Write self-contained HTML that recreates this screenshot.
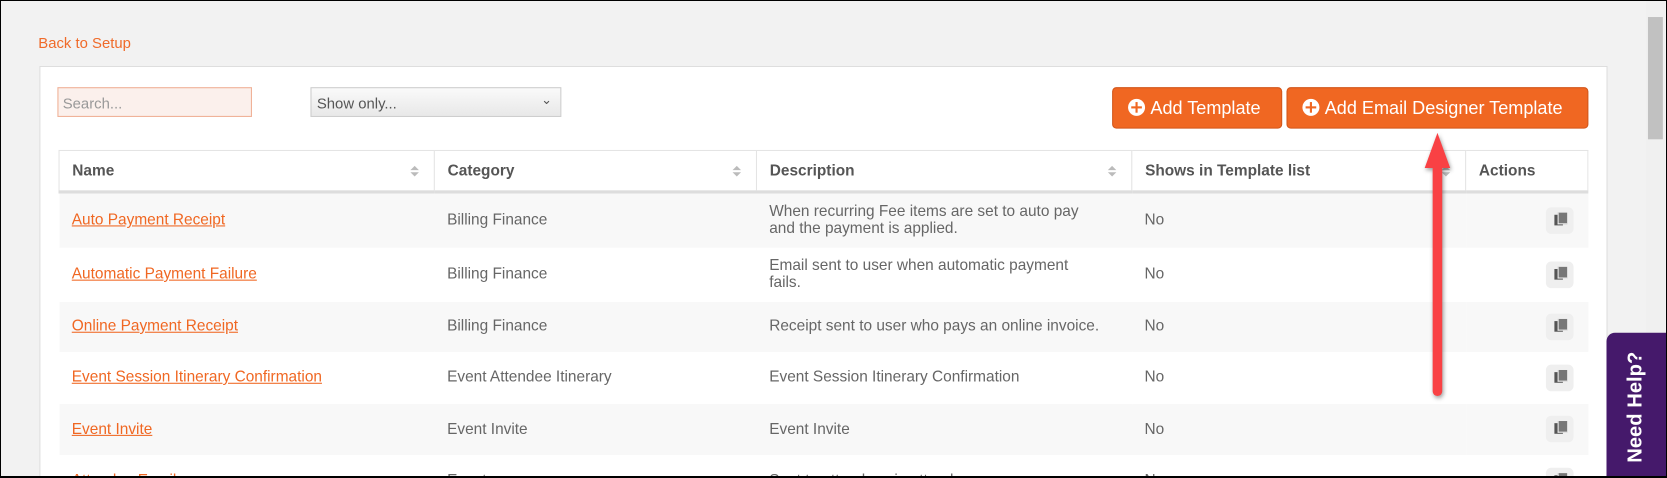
<!DOCTYPE html>
<html><head><style>
*{box-sizing:border-box;margin:0;padding:0}
html,body{width:1667px;height:478px;overflow:hidden}
body{background:#f2f2f2;font-family:"Liberation Sans",sans-serif;position:relative}
#c{position:absolute;left:0;top:0;width:1667px;height:478px;overflow:hidden}
#f{position:absolute;left:0;top:0;width:1667px;height:478px;border:1px solid #000;border-bottom:2px solid #000;pointer-events:none}
#w{position:absolute;left:0;top:0;width:1568px;height:449px;overflow:hidden;transform:scale(1.0632);transform-origin:0 0}
.back{position:absolute;left:36px;top:32px;color:#f06b2a;font-size:14px}
.card{position:absolute;left:37px;top:62px;width:1475px;height:400px;background:#fff;border:1px solid #ddd}
.search{position:absolute;left:54px;top:82px;width:183px;height:28px;background:#fbf0ec;border:1px solid #f0b096;color:#999;font-size:14px;padding:6px 4px}
.sel{position:absolute;left:292px;top:82px;width:236px;height:28px;background:linear-gradient(#fafafa,#e8e8e8);border:1px solid #ccc;color:#555;font-size:14px;padding:6px 5px}
.btn{position:absolute;top:82px;height:39px;background:#f06722;border:1px solid #d2561a;border-radius:4px;color:#fff;font-size:17px;line-height:37px;padding-left:14px}
.btn i{display:inline-block;width:16px;height:16px;border-radius:50%;background:#fff;vertical-align:-2px;margin-right:5px;position:relative}
.btn i:before{content:"";position:absolute;left:7px;top:3px;width:2px;height:10px;background:#f06722}
.btn i:after{content:"";position:absolute;left:3px;top:7px;width:10px;height:2px;background:#f06722}
.tw{position:absolute;left:55px;top:141px;width:1439px;height:320px;overflow:hidden}
table{width:1439px;border-collapse:collapse;font-size:14.5px;color:#666}
th{height:39px;text-align:left;font-weight:bold;color:#555;padding-left:12px;border:1px solid #e4e4e4;border-bottom:3px solid #ddd;position:relative}
th .s{position:absolute;right:18px;top:14px;width:0;height:0}
th .s:before{content:"";position:absolute;left:-4px;top:0;border:4px solid transparent;border-bottom:4px solid #bbb;border-top:0}
th .s:after{content:"";position:absolute;left:-4px;top:6px;border:4px solid transparent;border-top:4px solid #bbb;border-bottom:0}
td{padding-left:12px;line-height:16px;vertical-align:middle}
tr.o td{background:#f8f8f8}
td a{color:#f06722;text-decoration:underline}
.cp{float:right;margin-right:14px;width:26px;height:25px;background:#efefef;border-radius:5px;position:relative}
.cp:before{content:"";position:absolute;left:8px;top:7px;width:8px;height:10px;background:#555}
.cp:after{content:"";position:absolute;left:11px;top:5px;width:8px;height:10px;background:#777;border-left:1px solid #efefef;border-bottom:1px solid #efefef}
.sb{position:absolute;left:1548px;top:0;width:18px;height:449px;background:#f0f0f0}
.sb div{position:absolute;left:2px;top:16px;width:14px;height:115px;background:#c1c1c1}
.help{position:absolute;left:1511px;top:313px;width:57px;height:136px;background:#45196b;border-radius:8px 0 0 0}
.help span{position:absolute;left:28px;top:70px;transform:translate(-50%,-50%) rotate(-90deg);color:#fff;font-weight:bold;font-size:19px;white-space:nowrap}
</style></head><body><div id="c"><div id="w">
<div class="back">Back to Setup</div>
<div class="card"></div>
<div class="search">Search...</div>
<div class="sel">Show only...<span style="position:absolute;right:8px;top:4px;font-size:12px">&#8964;</span></div>
<div class="btn" style="left:1046px;width:160px"><i></i>Add Template</div>
<div class="btn" style="left:1210px;width:284px"><i></i>Add Email Designer Template</div>
<div class="tw"><table>
<tr><th style="width:353px">Name<span class="s"></span></th><th style="width:303px">Category<span class="s"></span></th><th style="width:353px">Description<span class="s"></span></th><th style="width:314px">Shows in Template list<span class="s"></span></th><th>Actions</th></tr>
<tr class="o" style="height:52px"><td><a>Auto Payment Receipt</a></td><td>Billing Finance</td><td>When recurring Fee items are set to auto pay<br>and the payment is applied.</td><td>No</td><td><span class="cp"></span></td></tr>
<tr style="height:51px"><td><a>Automatic Payment Failure</a></td><td>Billing Finance</td><td>Email sent to user when automatic payment<br>fails.</td><td>No</td><td><span class="cp"></span></td></tr>
<tr class="o" style="height:47px"><td><a>Online Payment Receipt</a></td><td>Billing Finance</td><td>Receipt sent to user who pays an online invoice.</td><td>No</td><td><span class="cp"></span></td></tr>
<tr style="height:49px"><td><a>Event Session Itinerary Confirmation</a></td><td>Event Attendee Itinerary</td><td>Event Session Itinerary Confirmation</td><td>No</td><td><span class="cp"></span></td></tr>
<tr class="o" style="height:48px"><td><a>Event Invite</a></td><td>Event Invite</td><td>Event Invite</td><td>No</td><td><span class="cp"></span></td></tr>
<tr style="height:49px"><td><a>Attendee Email</a></td><td>Event</td><td>Sent to attendees in attendance</td><td>No</td><td><span class="cp"></span></td></tr>
</table></div>
<svg style="position:absolute;left:1330px;top:120px" width="50" height="260"><g filter="drop-shadow(1px 2px 2px rgba(0,0,0,.4))"><line x1="22" y1="30" x2="22" y2="248" stroke="#f94144" stroke-width="9" stroke-linecap="round"/><polygon points="22,5 10,38 34,38" fill="#f94144"/></g></svg>
<div class="sb"><div></div></div>
<div class="help"><span>Need Help?</span></div>
</div><div id="f"></div></div></body></html>
